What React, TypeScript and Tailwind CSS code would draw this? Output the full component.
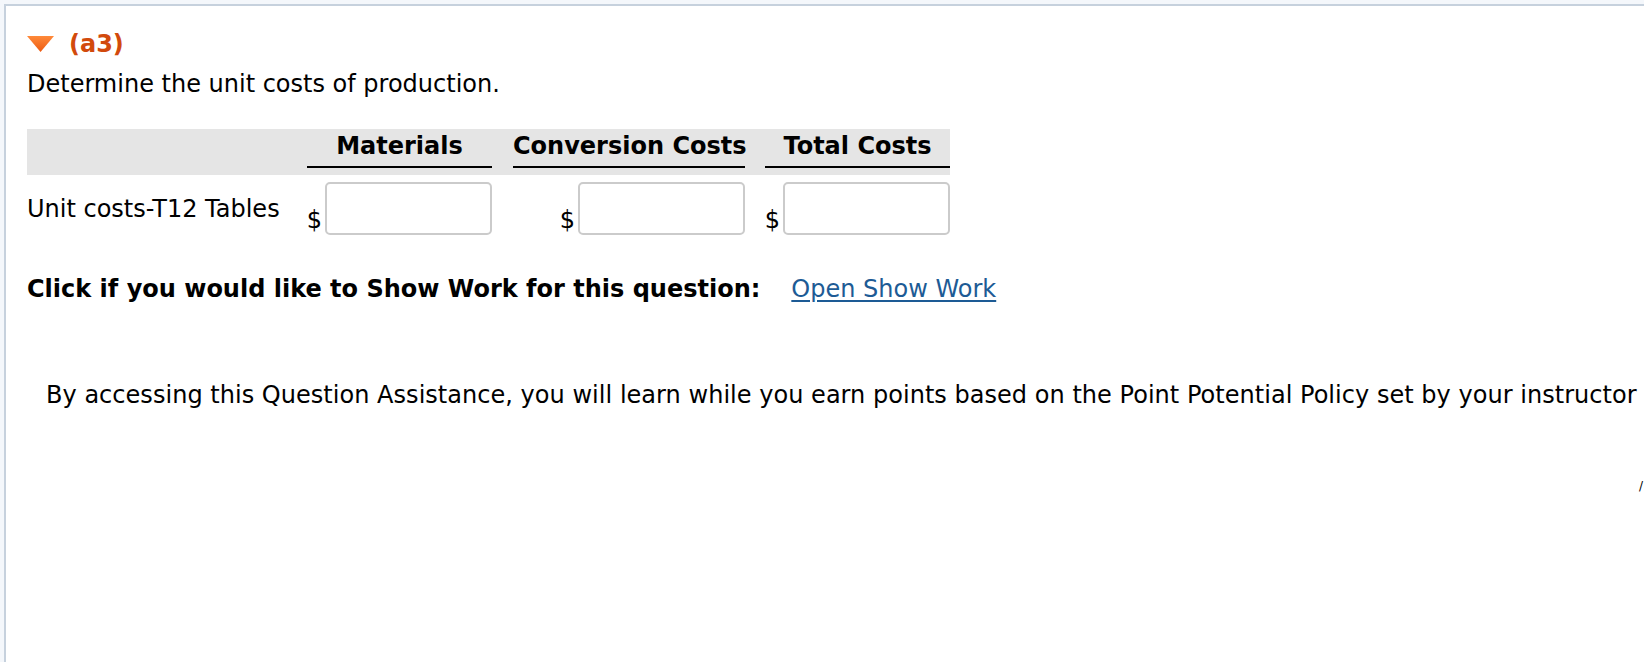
import React from "react";

const font = {fontFamily: '"DejaVu Sans", Verdana, sans-serif'};

function Caret() {
    return (
        <svg width="27" height="16" viewBox="0 0 27 16" className="shrink-0">
            <defs>
                <linearGradient id="caretFill" x1="0" y1="0" x2="0" y2="1">
                    <stop offset="0" stopColor="#ff8a3a" />
                    <stop offset="1" stopColor="#ec5a12" />
                </linearGradient>
            </defs>
            <polygon points="0,0 27,0 13.5,16" fill="url(#caretFill)" />
        </svg>
    );
}

function MoneyInput({className}: {className: string}) {
    return (
        <div className={`flex items-end justify-end ${className}`}>
            <span className="text-[24px] leading-[28px] text-black mr-[3px] mb-[1px]">$</span>
            <input type="text" className="w-[167px] h-[53px] border-2 border-[#cbcbcb] rounded-[5px] bg-white outline-none" />
        </div>
    );
}

export default function App() {
    return (
        <div className="w-[1644px] h-[662px] bg-[#f4f7fb] pt-[4px] pl-[4px] overflow-hidden" style={font}>
            <div className="h-full bg-white border-t-2 border-l-2 border-[#c6d1dd] pl-[21px] pt-[23px] overflow-hidden text-black">
                <div className="flex items-center h-[30px]">
                    <Caret />
                    <span className="ml-[15px] text-[24px] font-bold text-[#d24a0c] leading-[30px]">(a3)</span>
                </div>
                <p className="mt-[10px] text-[24px] leading-[30px]">Determine the unit costs of production.</p>

                {/* header row */}
                <div className="mt-[30px] w-[923px] h-[46px] bg-[#e5e5e5] flex pt-[2px]">
                    <div className="w-[280px]" />
                    <div className="w-[185px] h-[37px] border-b-2 border-black text-center text-[24px] font-bold leading-[30px] whitespace-nowrap">Materials</div>
                    <div className="w-[232px] ml-[21px] h-[37px] border-b-2 border-black text-center text-[24px] font-bold leading-[30px] whitespace-nowrap">Conversion Costs</div>
                    <div className="w-[185px] ml-[20px] h-[37px] border-b-2 border-black text-center text-[24px] font-bold leading-[30px] whitespace-nowrap">Total Costs</div>
                </div>

                {/* data row */}
                <div className="mt-[7px] flex">
                    <div className="w-[280px] pt-[12px] text-[24px] leading-[30px] whitespace-nowrap">Unit costs-T12 Tables</div>
                    <MoneyInput className="w-[185px]" />
                    <MoneyInput className="w-[232px] ml-[21px]" />
                    <MoneyInput className="w-[185px] ml-[20px]" />
                </div>

                <div className="mt-[39px] flex items-center text-[24px] leading-[30px]">
                    <span className="font-bold">Click if you would like to Show Work for this question:</span>
                    <a href="#" className="ml-[31px] text-[#1d5b95] underline underline-offset-[3px]">Open Show Work</a>
                </div>

                <p className="mt-[76px] ml-[19px] text-[24px] leading-[30px] whitespace-nowrap tracking-[0.03px]">
                    By accessing this Question Assistance, you will learn while you earn points based on the Point Potential Policy set by your instructor
                </p>

                <div className="mt-[68px] flex justify-end h-[16px] pr-[1px]">
                    <span className="text-[12px] leading-[16px] text-black">/</span>
                </div>
            </div>
        </div>
    );
}
